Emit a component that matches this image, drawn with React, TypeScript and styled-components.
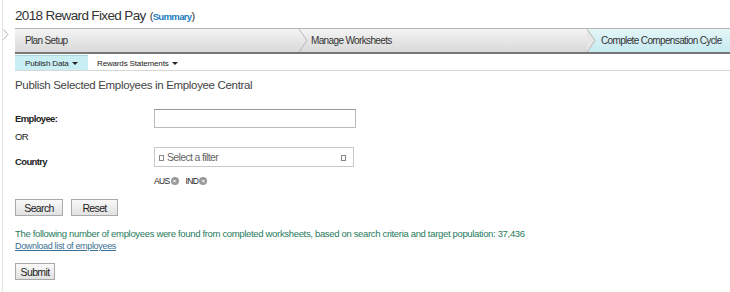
import styled, { createGlobalStyle } from "styled-components";

const GlobalStyle = createGlobalStyle`
  html, body {
    margin: 0;
    padding: 0;
    background: #fff;
  }
  body {
    font-family: "Liberation Sans", Arial, sans-serif;
    letter-spacing: -0.04em;
    color: #333;
  }
`;

const Page = styled.div`
  display: flex;
  width: 730px;
  height: 292px;
  overflow: hidden;
`;

const SideRail = styled.div`
  width: 2px;
  border-right: 1px solid #e4e4e4;
  position: relative;
  flex-shrink: 0;
`;

const RailArrow = styled.svg`
  position: absolute;
  left: 3px;
  top: 29px;
`;

const Main = styled.div`
  flex: 1;
  padding-left: 12px;
  display: flex;
  flex-direction: column;
`;

const TitleRow = styled.div`
  height: 28px;
  display: flex;
  align-items: center;
  padding-top: 3px;
  box-sizing: border-box;
  font-size: 13.5px;
  color: #333;
`;

const SummaryLink = styled.span`
  margin-left: 4px;
  font-size: 11px;
  color: #333;
  b {
    color: #1d7bc0;
    font-size: 9.5px;
  }
`;

const StepBar = styled.div`
  display: flex;
  height: 23px;
  border-top: 1px solid #b5b5b5;
  border-bottom: 2px solid #777;
  background: linear-gradient(#f4f4f4, #d9d9d9);
`;

const Step = styled.div<{ $active?: boolean; $width: number }>`
  position: relative;
  width: ${(p) => p.$width}px;
  flex: ${(p) => (p.$active ? 1 : "none")};
  display: flex;
  align-items: center;
  padding-left: ${(p) => (p.$active ? 12 : 10)}px;
  box-sizing: border-box;
  font-size: 10px;
  color: #333;
  white-space: nowrap;
  background: ${(p) => (p.$active ? "linear-gradient(#e4f6f9, #c6eaf0)" : "transparent")};
`;

const StepChevron = styled.svg`
  position: absolute;
  left: -2px;
  top: 0;
`;

const TabRow = styled.div`
  display: flex;
  height: 15px;
  margin-top: 1px;
  border-bottom: 1px solid #d6d6d6;
`;

const Tab = styled.div<{ $active?: boolean }>`
  display: flex;
  align-items: center;
  gap: 3px;
  padding: 0 8px 0 ${(p) => (p.$active ? 10 : 9)}px;
  min-width: ${(p) => (p.$active ? 73 : 0)}px;
  box-sizing: border-box;
  font-size: 8px;
  letter-spacing: -0.15px;
  color: #222;
  background: ${(p) => (p.$active ? "#c9eef3" : "transparent")};
  border-top: ${(p) => (p.$active ? "1px solid #9fd6df" : "1px solid transparent")};
`;

const Caret = styled.span`
  width: 0;
  height: 0;
  border-left: 3px solid transparent;
  border-right: 3px solid transparent;
  border-top: 3px solid #222;
`;

const SectionTitle = styled.div`
  margin-top: 8px;
  font-size: 11.5px;
  letter-spacing: -0.33px;
  color: #444;
`;

const Form = styled.div`
  display: grid;
  grid-template-columns: 139px 202px;
  margin-top: 18px;
`;

const Label = styled.div<{ $bold?: boolean; $top?: number }>`
  font-size: 9.5px;
  font-weight: ${(p) => (p.$bold ? "bold" : "normal")};
  color: #222;
  padding-top: ${(p) => p.$top ?? 0}px;
`;

const TextInput = styled.div`
  height: 19px;
  border: 1px solid #bbb;
  border-top-color: #999;
  box-sizing: border-box;
  background: #fff;
`;

const FilterCell = styled.div`
  margin-top: 5px;
`;

const SelectBox = styled.div`
  height: 20px;
  width: 200px;
  border: 1px solid #c8c8c8;
  box-sizing: border-box;
  display: flex;
  align-items: center;
  padding: 0 7px 0 4px;
  font-size: 10.5px;
  color: #666;
  gap: 3px;
`;

const Square = styled.span`
  width: 3px;
  height: 4px;
  border: 1px solid #888;
  display: inline-block;
  margin-top: 1px;
`;

const Spacer = styled.span`
  flex: 1;
`;

const Chips = styled.div`
  display: flex;
  gap: 7px;
  font-size: 8.5px;
  color: #222;
  margin-top: 9px;
`;

const Chip = styled.span`
  display: flex;
  align-items: center;
  gap: 1px;
`;

const ChipX = styled.span`
  width: 8px;
  height: 8px;
  border-radius: 50%;
  background: #999;
  color: #fff;
  font-size: 6px;
  line-height: 8px;
  text-align: center;
  font-weight: bold;
  letter-spacing: 0;
`;

const ButtonRow = styled.div`
  display: flex;
  gap: 8px;
  margin-top: 13px;
`;

const Button = styled.div<{ $w: number }>`
  width: ${(p) => p.$w}px;
  height: 17px;
  box-sizing: border-box;
  border: 1px solid #a9a9a9;
  background: linear-gradient(#f8f8f8, #e2e2e2);
  font-size: 10.5px;
  color: #222;
  display: flex;
  align-items: center;
  justify-content: center;
`;

const Result = styled.div`
  margin-top: 12px;
  font-size: 9.5px;
  letter-spacing: -0.33px;
  color: #1f7a5c;
`;

const DownloadLink = styled.a`
  display: block;
  margin-top: 2px;
  font-size: 9px;
  letter-spacing: -0.33px;
  color: #3a6f93;
  text-decoration: underline;
`;

const SubmitRow = styled.div`
  margin-top: 12px;
`;

const steps = [
  { label: "Plan Setup", width: 286 },
  { label: "Manage Worksheets", width: 288 },
  { label: "Complete Compensation Cycle", width: 0, active: true },
];

export default function App() {
  return (
    <>
      <GlobalStyle />
      <Page>
        <SideRail>
          <RailArrow width="6" height="11" viewBox="0 0 6 11">
            <path d="M0.5 0.5 L5 5.5 L0.5 10.5" stroke="#aaa" strokeWidth="1" fill="none" />
          </RailArrow>
        </SideRail>
        <Main>
          <TitleRow>
            2018 Reward Fixed Pay
            <SummaryLink>
              (<b>Summary</b>)
            </SummaryLink>
          </TitleRow>
          <StepBar>
            {steps.map((s, i) => (
              <Step key={s.label} $active={s.active} $width={s.width}>
                {i > 0 && (
                  <StepChevron width="10" height="23" viewBox="0 0 10 23">
                    <path d="M0 0 L8 11.5 L0 23 Z" fill={s.active ? "#e6e6e6" : "transparent"} />
                    <path d="M0 0 L8 11.5 L0 23" stroke="#b8b8b8" strokeWidth="1" fill="none" />
                  </StepChevron>
                )}
                {s.label}
              </Step>
            ))}
          </StepBar>
          <TabRow>
            <Tab $active>
              Publish Data <Caret />
            </Tab>
            <Tab>
              Rewards Statements <Caret />
            </Tab>
          </TabRow>
          <SectionTitle>Publish Selected Employees in Employee Central</SectionTitle>
          <Form>
            <Label $bold $top={4}>
              Employee:
            </Label>
            <TextInput />
            <Label $top={3}>OR</Label>
            <div />
            <Label $bold $top={14}>
              Country
            </Label>
            <FilterCell>
              <SelectBox>
                <Square /> Select a filter
                <Spacer />
                <Square />
              </SelectBox>
              <Chips>
                <Chip>
                  AUS<ChipX>×</ChipX>
                </Chip>
                <Chip>
                  IND<ChipX>×</ChipX>
                </Chip>
              </Chips>
            </FilterCell>
          </Form>
          <ButtonRow>
            <Button $w={48}>Search</Button>
            <Button $w={47}>Reset</Button>
          </ButtonRow>
          <Result>
            The following number of employees were found from completed worksheets, based on search criteria and target
            population: 37,436
          </Result>
          <DownloadLink>Download list of employees</DownloadLink>
          <SubmitRow>
            <Button $w={40}>Submit</Button>
          </SubmitRow>
        </Main>
      </Page>
    </>
  );
}
